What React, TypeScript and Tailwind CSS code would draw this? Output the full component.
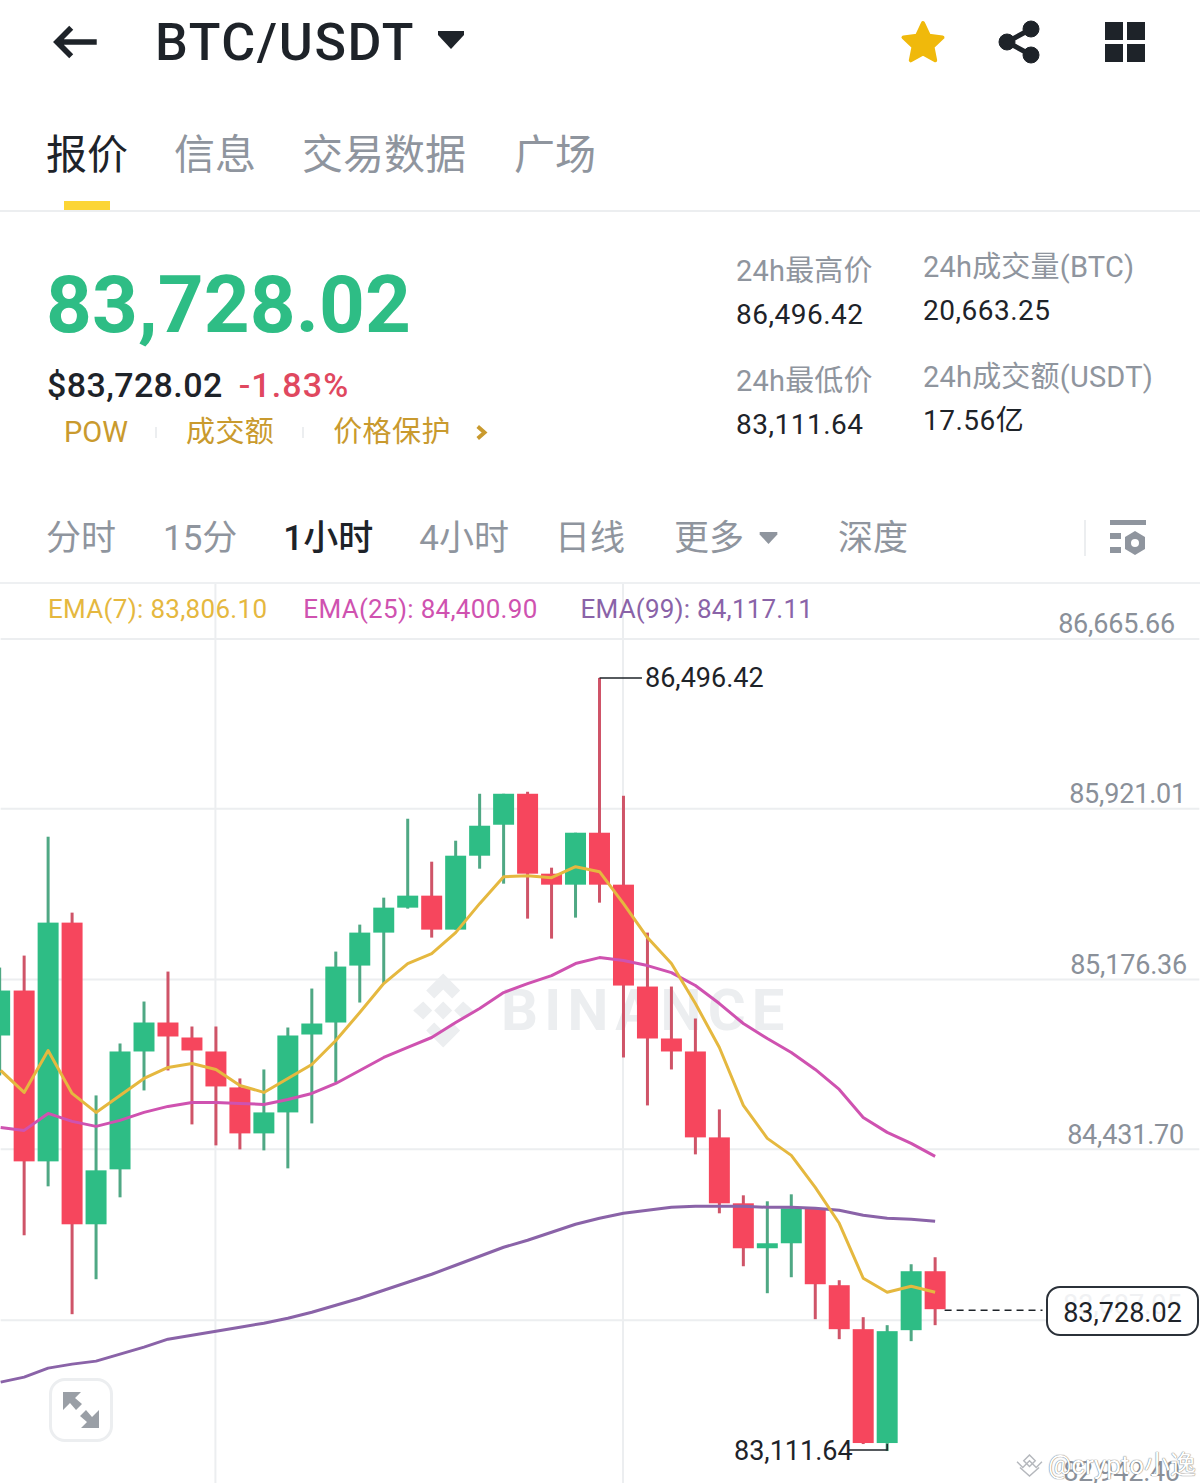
import React from 'react'

// x, wick top, wick bottom, [body top, body bottom] - read off the picture
const candles: [number, number, number, number, number, 'g' | 'r'][] = [
  [-1, 967, 1075, 990, 1035, 'g'],
  [23.5, 955, 1235, 990, 1161, 'r'],
  [47.5, 836, 1186, 922, 1161, 'g'],
  [71.5, 912, 1314, 922, 1224, 'r'],
  [95.5, 1095, 1279, 1170, 1224, 'g'],
  [119.5, 1043, 1197, 1051, 1169, 'g'],
  [143.5, 1001, 1090, 1022, 1051, 'g'],
  [167.5, 971, 1070, 1022, 1036, 'r'],
  [191.5, 1026, 1124, 1037, 1050, 'r'],
  [215.5, 1026, 1145, 1051, 1086, 'r'],
  [239.5, 1078, 1149, 1087, 1133, 'r'],
  [263.5, 1069, 1150, 1112, 1133, 'g'],
  [287.5, 1027, 1168, 1035, 1112, 'g'],
  [311.5, 988, 1123, 1023, 1034, 'g'],
  [335.5, 951, 1082, 966, 1022, 'g'],
  [359.5, 924, 1002, 932, 965, 'g'],
  [383.5, 897, 983, 907, 932, 'g'],
  [407.5, 818, 908, 895, 907, 'g'],
  [431.5, 861, 937, 895, 929, 'r'],
  [455.5, 840, 929, 855, 929, 'g'],
  [479.5, 793, 868, 825, 855, 'g'],
  [503.5, 793, 883, 793, 824, 'g'],
  [527.5, 791, 918, 793, 873, 'r'],
  [551.5, 867, 938, 873, 884, 'r'],
  [575.5, 832, 917, 832, 884, 'g'],
  [599.5, 677, 902, 832, 884, 'r'],
  [623.5, 795, 1057, 884, 985, 'r'],
  [647.5, 932, 1105, 986, 1038, 'r'],
  [671.5, 986, 1069, 1038, 1051, 'r'],
  [695.5, 1018, 1154, 1051, 1137, 'r'],
  [719.5, 1109, 1213, 1137, 1203, 'r'],
  [743.5, 1195, 1266, 1203, 1248, 'r'],
  [767.5, 1201, 1293, 1243, 1248, 'g'],
  [791.5, 1194, 1277, 1208, 1243, 'g'],
  [815.5, 1208, 1319, 1208, 1284, 'r'],
  [839.5, 1280, 1339, 1285, 1329, 'r'],
  [863.5, 1317, 1444, 1329, 1443, 'r'],
  [887.5, 1325, 1451, 1331, 1443, 'g'],
  [911.5, 1264, 1341, 1271, 1330, 'g'],
  [935.5, 1257, 1325, 1271, 1309, 'r'],
]

const ema7 =
  '0,1070 23.5,1092 47.5,1050 71.5,1093 95.5,1112 119.5,1095 143.5,1078 167.5,1067 191.5,1063 215.5,1069 239.5,1085 263.5,1092 287.5,1078 311.5,1064 335.5,1040 359.5,1012 383.5,983 407.5,963 431.5,953 455.5,932 479.5,903 503.5,876 527.5,875 551.5,877 575.5,866 599.5,871 623.5,903 647.5,937 671.5,963 695.5,1003 719.5,1047 743.5,1105 767.5,1138 791.5,1155 815.5,1187 839.5,1223 863.5,1278 887.5,1292 911.5,1286 935.5,1292'
const ema25 =
  '0,1127 23.5,1130 47.5,1113 71.5,1121 95.5,1126 119.5,1120 143.5,1112 167.5,1106 191.5,1102 215.5,1102 239.5,1103 263.5,1104 287.5,1099 311.5,1093 335.5,1083 359.5,1070 383.5,1057 407.5,1047 431.5,1037 455.5,1022 479.5,1008 503.5,992 527.5,983 551.5,975 575.5,963 599.5,957 623.5,960 647.5,965 671.5,972 695.5,985 719.5,1003 743.5,1023 767.5,1038 791.5,1052 815.5,1069 839.5,1089 863.5,1117 887.5,1132 911.5,1143 935.5,1156'
const ema99 =
  '0,1382 23.5,1377 47.5,1368 71.5,1364 95.5,1361 119.5,1354 143.5,1347 167.5,1339 191.5,1335 215.5,1331 239.5,1327 263.5,1323 287.5,1318 311.5,1312 335.5,1305 359.5,1298 383.5,1290 407.5,1282 431.5,1274 455.5,1265 479.5,1256 503.5,1247 527.5,1240 551.5,1232 575.5,1224 599.5,1218 623.5,1213 647.5,1210 671.5,1207 695.5,1206 719.5,1206 743.5,1206 767.5,1207 791.5,1207 815.5,1208 839.5,1210 863.5,1215 887.5,1218 911.5,1219 935.5,1221'

function Caret({ className }: { className: string }) {
  return (
    <svg viewBox="0 0 28 20" className={className} fill="currentColor">
      <path d="M1 1h26v4L14 19 1 5z" />
    </svg>
  )
}

function Stat({ label, value, className }: { label: string; value: string; className?: string }) {
  return (
    <div className={className}>
      <div className="text-[29px] leading-[38px] text-[#8f959e] tracking-[0.2px] whitespace-nowrap">{label}</div>
      <div className="mt-[6px] text-[28px] leading-[38px] text-[#1e2329] tracking-[0.5px] whitespace-nowrap">{value}</div>
    </div>
  )
}

function AxisLabel({ y, right, text }: { y: string; right: string; text: string }) {
  return (
    <div className={`absolute ${y} ${right} text-[27px] leading-[32px] text-[#8a9099] tracking-[-0.2px] whitespace-nowrap`}>
      {text}
    </div>
  )
}

export default function App() {
  return (
    <div className="w-[1200px] h-[1483px] overflow-hidden bg-white flex flex-col font-['Roboto','Noto_Sans_CJK_SC',sans-serif]">
      {/* Header */}
      <header className="h-[84px] shrink-0 flex items-center text-[#1e2329]">
        <svg viewBox="0 0 48 36" className="ml-[52px] w-[46px] h-[34px]" fill="none" stroke="currentColor" strokeWidth="6">
          <path d="M47 18H5M20 3 5 18l15 15" />
        </svg>
        <div className="ml-[57px] text-[52px] font-medium leading-none tracking-[1.6px] mt-[2px]">BTC/USDT</div>
        <Caret className="ml-[22px] w-[28px] h-[20px] -mt-[4px]" />
        <svg viewBox="0 0 48 48" className="ml-auto w-[48px] h-[48px] text-[#f0b90b]" fill="currentColor" stroke="currentColor" strokeWidth="4" strokeLinejoin="round">
          <path d="M24 5l6 12.8 13.5 1.6-10 9.4 2.7 13.5L24 35.6l-12.2 6.7 2.7-13.5-10-9.4L18 17.8z" />
        </svg>
        <svg viewBox="0 0 44 44" className="ml-[50px] w-[44px] h-[44px]" fill="currentColor" stroke="currentColor">
          <circle cx="34" cy="9" r="8" />
          <circle cx="34" cy="35" r="8" />
          <circle cx="10" cy="22" r="8" />
          <path d="M34 9 10 22l24 13" fill="none" strokeWidth="5" />
        </svg>
        <div className="ml-[64px] mr-[55px] grid grid-cols-2 gap-[4px] w-[40px]">
          <div className="h-[18px] bg-[#1e2329]" />
          <div className="h-[18px] bg-[#1e2329]" />
          <div className="h-[18px] bg-[#1e2329]" />
          <div className="h-[18px] bg-[#1e2329]" />
        </div>
      </header>

      {/* Tabs */}
      <nav className="h-[128px] shrink-0 border-b-2 border-[#eceef0] flex items-end pl-[46px] gap-[46px] text-[41px] leading-none text-[#8f959e]">
        <div className="relative h-[75px] text-[#1e2329]">
          报价
          <div className="absolute left-[18px] bottom-0 w-[46px] h-[9px] bg-[#fcd535]" />
        </div>
        <div className="h-[75px]">信息</div>
        <div className="h-[75px]">交易数据</div>
        <div className="h-[75px] ml-[2px]">广场</div>
      </nav>

      {/* Price block */}
      <section className="h-[288px] shrink-0 relative pl-[47px]">
        <div className="pt-[48px] text-[80px] leading-[90px] font-bold text-[#2ebd85] tracking-[0.1px] -ml-[1px]">83,728.02</div>
        <div className="mt-[13px] flex items-center text-[34px] leading-[44px] font-medium">
          <span className="text-[#1e2329] tracking-[0.4px]">$83,728.02</span>
          <span className="ml-[16px] text-[#e0485f] tracking-[1.1px]">-1.83%</span>
        </div>
        <div className="mt-[5px] flex items-center text-[29px] leading-[40px] text-[#c99a2e]">
          <span className="ml-[17px]">POW</span>
          <span className="ml-[27px] w-[2px] h-[11px] bg-[#eceef0]" />
          <span className="ml-[29px] tracking-[0.4px]">成交额</span>
          <span className="ml-[28px] w-[2px] h-[11px] bg-[#eceef0]" />
          <span className="ml-[29px] tracking-[0.4px]">价格保护</span>
          <svg viewBox="0 0 14 18" className="ml-[25px] w-[12px] h-[17px]" fill="none" stroke="currentColor" strokeWidth="4.5">
            <path d="M2 2l8 7-8 7" />
          </svg>
        </div>
        <div className="absolute left-[736px] top-[40px]">
          <Stat label="24h最高价" value="86,496.42" />
          <Stat label="24h最低价" value="83,111.64" className="mt-[28px]" />
        </div>
        <div className="absolute left-[923px] top-[36px]">
          <Stat label="24h成交量(BTC)" value="20,663.25" />
          <Stat label="24h成交额(USDT)" value="17.56亿" className="mt-[28px]" />
        </div>
      </section>

      {/* Periods */}
      <div className="h-[84px] shrink-0 flex items-center pl-[46px] text-[35px] leading-none text-[#8f959e] border-b-2 border-[#eef0f2] pb-[6px]">
        <span>分时</span>
        <span className="ml-[47px]">15分</span>
        <span className="ml-[46px] text-[#1e2329] font-medium">1小时</span>
        <span className="ml-[46px]">4小时</span>
        <span className="ml-[46px]">日线</span>
        <span className="ml-[49px]">更多</span>
        <Caret className="ml-[15px] w-[19px] h-[14px]" />
        <span className="ml-[60px]">深度</span>
        <div className="ml-auto w-[2px] h-[36px] bg-[#eceef0]" />
        <svg viewBox="0 0 36 36" className="ml-[24px] mr-[54px] w-[36px] h-[36px]" fill="currentColor">
          <rect x="0" y="0" width="36" height="5" />
          <rect x="0" y="13" width="11" height="6" />
          <rect x="0" y="27" width="11" height="6" />
          <path fillRule="evenodd" d="M25 11l10 6v12l-10 6-10-6V17zm0 8a4 4 0 1 0 0 8 4 4 0 0 0 0-8z" />
        </svg>
      </div>

      {/* Chart */}
      <div className="relative flex-1">
        <svg viewBox="0 583 1200 900" className="absolute inset-0 w-full h-full">
          <g stroke="#eceef0" strokeWidth="2">
            <path d="M0 638H1200M0 808H1200M0 979H1200M0 1149H1200M0 1320H1200" />
            <path d="M215 583V1483M623 583V1483" />
          </g>
          {/* watermark */}
          <g fill="#eceef0">
            <path d="M443 973l17 17-8 8-9-9-9 9-8-8zM443 1047l17-17-8-8-9 9-9-9-8 8zM443 1001l9 9-9 9-9-9zM423 1001l9 9-9 9-10-9zM463 1001l10 9-10 9-9-9z" />
          </g>
          <text x="501" y="1030" fill="#eceef0" fontSize="58" fontWeight="700" letterSpacing="6.3" fontFamily="Roboto, sans-serif">BINANCE</text>
          {candles.map(([x, wickTop, wickBottom, top, bottom, side]) => (
            <g key={x}>
              <rect x={x - 1.5} y={wickTop} width="3" height={wickBottom - wickTop} fill={side === 'g' ? '#4fa884' : '#cf5468'} />
              <rect x={x - 10.5} y={top} width="21" height={bottom - top} fill={side === 'g' ? '#2ebd85' : '#f6465d'} />
            </g>
          ))}
          <g fill="none" strokeWidth="3" strokeLinejoin="round">
            <polyline points={ema99} stroke="#8a63a8" />
            <polyline points={ema25} stroke="#cf52b0" />
            <polyline points={ema7} stroke="#e5b83f" />
          </g>
          <g stroke="#1e2329" strokeWidth="1.5" fill="none">
            <path d="M599.5 677H642" />
            <path d="M887.5 1444V1450H848" />
            <path d="M945 1310h98" strokeDasharray="7 5" />
          </g>
        </svg>

        <div className="relative flex items-center pl-[48px] pt-[8px] text-[26px] leading-[34px] tracking-[0.3px]">
          <span className="text-[#e5b83f]">EMA(7): 83,806.10</span>
          <span className="ml-[36px] text-[#cf52b0]">EMA(25): 84,400.90</span>
          <span className="ml-[43px] text-[#8a63a8] tracking-[0.2px]">EMA(99): 84,117.11</span>
        </div>

        <AxisLabel y="top-[24px]" right="right-[25px]" text="86,665.66" />
        <AxisLabel y="top-[194px]" right="right-[14px]" text="85,921.01" />
        <AxisLabel y="top-[365px]" right="right-[13px]" text="85,176.36" />
        <AxisLabel y="top-[535px]" right="right-[16px]" text="84,431.70" />
        <AxisLabel y="top-[872px]" right="right-[20px]" text="82,942.40" />

        <div className="absolute left-[645px] top-[78px] text-[27px] leading-[32px] text-[#1e2329]">86,496.42</div>
        <div className="absolute left-[734px] top-[851px] text-[27px] leading-[32px] text-[#1e2329]">83,111.64</div>

        {/* current price, last axis label shows faintly through it */}
        <div className="absolute left-[1046px] top-[702px] w-[153px] h-[50px] rounded-[14px] border-2 border-[#2b3139] bg-white flex items-center justify-center text-[27px] text-[#1e2329]">
          <span className="absolute left-[15px] -top-[3px] text-[#f0f1f3]">83,687.05</span>
          <span className="relative mt-[4px]">83,728.02</span>
        </div>

        <div className="absolute left-[49px] top-[794px] w-[64px] h-[64px] rounded-[16px] border-[3px] border-[#eceef0] flex items-center justify-center">
          <svg viewBox="0 0 38 38" className="w-[38px] h-[38px] text-[#9a9fa6]" fill="currentColor">
            <path d="M1 1h18l-6 6 7 6-6 6-6-7-7 7zM37 37H19l6-6-7-6 6-6 6 7 7-7z" />
          </svg>
        </div>

        {/* repost mark */}
        <div className="absolute left-[1016px] top-[866px] flex items-center text-white [text-shadow:0_0_1px_#777,0_0_1px_#777]">
          <svg viewBox="0 0 28 24" className="w-[27px] h-[23px]" fill="none" stroke="#b5b8bd" strokeWidth="1.5">
            <path d="M1 8l6 6 7-7 7 7 6-6M14 1l6 6-6 6-6-6zM4 14l10 9 10-9" />
          </svg>
          <span className="ml-[5px] text-[26px] leading-[30px]">@crypto小逸</span>
        </div>
      </div>
    </div>
  )
}
